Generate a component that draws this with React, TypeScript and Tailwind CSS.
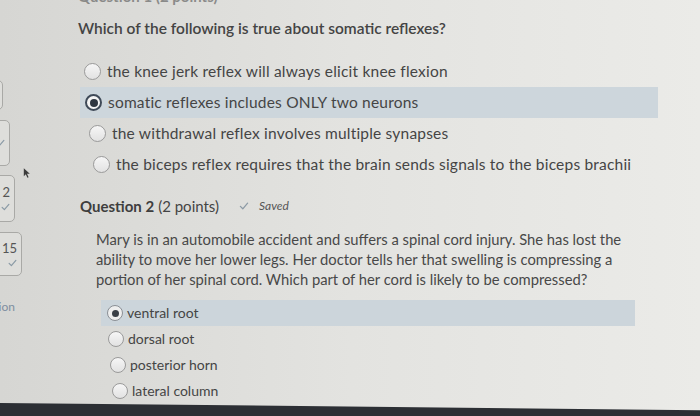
import React from "react";

type Opt = { text: string; selected?: boolean; pad: string };

const q1: Opt[] = [
  { text: "the knee jerk reflex will always elicit knee flexion", pad: "pl-[4px]" },
  { text: "somatic reflexes includes ONLY two neurons", selected: true, pad: "pl-[5px]" },
  { text: "the withdrawal reflex involves multiple synapses", pad: "pl-[9px]" },
  { text: "the biceps reflex requires that the brain sends signals to the biceps brachii", pad: "pl-[13px]" },
];

const q2: Opt[] = [
  { text: "ventral root", selected: true, pad: "pl-[6px]" },
  { text: "dorsal root", pad: "pl-[7px]" },
  { text: "posterior horn", pad: "pl-[9px]" },
  { text: "lateral column", pad: "pl-[11px]" },
];

function Radio({ selected, strong, size }: { selected?: boolean; strong?: boolean; size: string }) {
  if (selected && strong) {
    return (
      <span className={`${size} shrink-0 rounded-full border-[2.5px] border-[#3f4a58] bg-[#f4f4f4] flex items-center justify-center`}>
        <span className="w-[8px] h-[8px] rounded-full bg-[#2f3640]" />
      </span>
    );
  }
  if (selected) {
    return (
      <span className={`${size} shrink-0 rounded-full border-[1.5px] border-[#8a8f95] bg-[#eeeeee] flex items-center justify-center`}>
        <span className="w-[7px] h-[7px] rounded-full bg-[#3a3f46]" />
      </span>
    );
  }
  return (
    <span className={`${size} shrink-0 rounded-full border-[1.5px] border-[#9a9a9a] bg-gradient-to-b from-[#f6f6f6] to-[#e2e2e2]`} />
  );
}

function Check({ className }: { className: string }) {
  return (
    <svg viewBox="0 0 12 10" className={className} fill="none" stroke="currentColor" strokeWidth="1.6" strokeLinecap="round" strokeLinejoin="round">
      <path d="M1.5 5.5 L4.5 8.5 L10.5 1.5" />
    </svg>
  );
}

function NavBox({ label, check, h, w, mt }: { label?: string; check?: boolean; h: string; w: string; mt: string }) {
  return (
    <div className={`${h} ${w} ${mt} -ml-[24px] rounded-[5px] border border-[#a9a9a6] bg-[#dededb] flex flex-col items-end justify-center pr-[4px] gap-[4px]`}>
      {label && <span className="text-[13px] leading-none text-[#555]">{label}</span>}
      {check && <Check className="w-[9px] h-[8px] text-[#8a9aa6]" />}
    </div>
  );
}

export default function App() {
  return (
    <div
      className="w-[700px] h-[416px] overflow-hidden flex flex-col bg-gradient-to-r from-[#d6d6d3] via-[#e3e3e0] to-[#ebebe8] text-[#454545]"
      style={{ fontFamily: "Lato, 'Open Sans', sans-serif" }}
    >
      <div className="flex flex-1 min-h-0">
        {/* cut-off sidebar */}
        <div className="w-[60px] shrink-0 flex flex-col relative">
          <NavBox h="h-[30px]" w="w-[27px]" mt="mt-[80px]" />
          <NavBox h="h-[46px]" w="w-[34px]" mt="mt-[10px]" check />
          <NavBox h="h-[47px]" w="w-[39px]" mt="mt-[9px]" label="2" check />
          <NavBox h="h-[44px]" w="w-[46px]" mt="mt-[10px]" label="15" check />
          <span className="mt-[22px] -ml-[6px] text-[12px] text-[#7f8fa0]">tion</span>
          {/* mouse cursor */}
          <svg viewBox="0 0 10 14" className="absolute left-[23px] top-[167px] w-[8px] h-[12px]">
            <path d="M1 1 L1 11 L3.5 8.5 L5.5 13 L7 12.3 L5 8 L8.5 8 Z" fill="#3c3c3c" />
          </svg>
        </div>

        {/* main content */}
        <div className="flex-1 flex flex-col pl-[18px]">
          <div className="-mt-[14px] text-[15px] leading-[20px] font-bold text-[#555] opacity-60">
            Question 1 (2 points)
          </div>
          <div className="mt-[12px] text-[15.5px] leading-[20px] font-semibold text-[#444]">
            Which of the following is true about somatic reflexes?
          </div>

          <div className="mt-[18px] flex flex-col w-[578px] ml-[2px]">
            {q1.map((o) => (
              <div
                key={o.text}
                className={`h-[31px] flex items-center gap-[6px] ${o.pad} ${o.selected ? "bg-[#cdd6dc]" : ""}`}
              >
                <Radio selected={o.selected} strong size="w-[17px] h-[17px]" />
                <span className="text-[15.5px] leading-none tracking-[0.2px] whitespace-nowrap">{o.text}</span>
              </div>
            ))}
          </div>

          <div className="mt-[16px] ml-[2px] flex items-center">
            <span className="text-[15px] leading-[20px] font-bold text-[#3e3e3e]">Question 2</span>
            <span className="ml-[4px] text-[15px] leading-[20px] text-[#444]">(2 points)</span>
            <Check className="ml-[20px] w-[10px] h-[8px] text-[#8c9aa5]" />
            <span className="ml-[10px] text-[12px] italic text-[#555]">Saved</span>
          </div>

          <p className="mt-[13px] ml-[18px] w-[545px] text-[14.75px] leading-[20px] text-[#484848]">
            Mary is in an automobile accident and suffers a spinal cord injury. She has lost the ability to move her lower legs. Her doctor tells her that swelling is compressing a portion of her spinal cord. Which part of her cord is likely to be compressed?
          </p>

          <div className="mt-[11px] ml-[23px] w-[534px] flex flex-col">
            {q2.map((o) => (
              <div
                key={o.text}
                className={`h-[26px] flex items-center gap-[4px] ${o.pad} ${o.selected ? "bg-[#ccd5db]" : ""}`}
              >
                <Radio selected={o.selected} size="w-[16px] h-[16px]" />
                <span className="text-[14px] leading-none">{o.text}</span>
              </div>
            ))}
          </div>
        </div>
      </div>

      {/* bottom dark edge of the screen */}
      <div className="h-[13px] shrink-0 bg-[#2c2f34] [clip-path:polygon(0_0,100%_55%,100%_100%,0_100%)]" />
    </div>
  );
}
